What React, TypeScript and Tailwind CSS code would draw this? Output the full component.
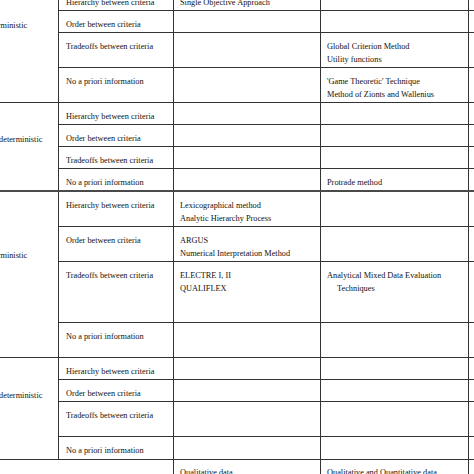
import React from 'react';

type Row = { h: string; crit: string; a?: string[]; b?: string[]; bIndent?: boolean };
type Section = { label: string; labelPad: string; rows: Row[]; thick?: boolean };

const sections: Section[] = [
  {
    label: 'Deterministic',
    labelPad: 'pt-[30px]',
    rows: [
      { h: 'h-[22px]', crit: 'Hierarchy between criteria', a: ['Single Objective Approach'] },
      { h: 'h-[22px]', crit: 'Order between criteria' },
      { h: 'h-[35px]', crit: 'Tradeoffs between criteria', b: ['Global Criterion Method', 'Utility functions'] },
      { h: 'h-[34px]', crit: 'No a priori information', b: ["'Game Theoretic' Technique", 'Method of Zionts and Wallenius'] },
    ],
  },
  {
    label: 'Non-deterministic',
    labelPad: 'pt-[30px]',
    thick: true,
    rows: [
      { h: 'h-[22px]', crit: 'Hierarchy between criteria' },
      { h: 'h-[22px]', crit: 'Order between criteria' },
      { h: 'h-[22px]', crit: 'Tradeoffs between criteria' },
      { h: 'h-[21px]', crit: 'No a priori information', b: ['Protrade method'] },
    ],
  },
  {
    label: 'Deterministic',
    labelPad: 'pt-[57px]',
    rows: [
      { h: 'h-[35px]', crit: 'Hierarchy between criteria', a: ['Lexicographical method', 'Analytic Hierarchy Process'] },
      { h: 'h-[35px]', crit: 'Order between criteria', a: ['ARGUS', 'Numerical Interpretation Method'] },
      { h: 'h-[61px]', crit: 'Tradeoffs between criteria', a: ['ELECTRE I, II', 'QUALIFLEX'], b: ['Analytical Mixed Data Evaluation', 'Techniques'], bIndent: true },
      { h: 'h-[34px]', crit: 'No a priori information' },
    ],
  },
  {
    label: 'Non-deterministic',
    labelPad: 'pt-[31px]',
    rows: [
      { h: 'h-[22px]', crit: 'Hierarchy between criteria' },
      { h: 'h-[22px]', crit: 'Order between criteria' },
      { h: 'h-[35px]', crit: 'Tradeoffs between criteria' },
      { h: 'h-[22px]', crit: 'No a priori information' },
    ],
  },
];

function Lines({ items, indent }: { items?: string[]; indent?: boolean }) {
  if (!items) return null;
  return (
    <>
      {items.map((t, i) => (
        <div key={i} className={'whitespace-nowrap ' + (indent && i > 0 ? 'pl-[10px]' : '')}>
          {t}
        </div>
      ))}
    </>
  );
}

export default function App() {
  return (
    <div
      className="w-[474px] h-[474px] overflow-hidden bg-white text-[#111] text-[8.3px] leading-[13px]"
      style={{ fontFamily: '"Liberation Serif", "Times New Roman", serif' }}
    >
      <div className="-mt-[11px]">
        {sections.map((s, si) => (
          <div
            key={si}
            className={'flex ' + (s.thick ? 'border-b-2 border-[#4a4a4a]' : 'border-b border-[#333]')}
          >
            <div className={'w-[58px] shrink-0 ' + s.labelPad}>
              <div className="-ml-[18px] whitespace-nowrap">{s.label}</div>
            </div>
            <div className="flex-1 border-l border-[#333]">
              {s.rows.map((r, ri) => (
                <div
                  key={ri}
                  className={
                    'flex ' + r.h + (ri < s.rows.length - 1 ? ' border-b border-[#333]' : '')
                  }
                >
                  <div className="w-[115px] shrink-0 border-r border-[#333] pl-[7px] pt-[7px] whitespace-nowrap">
                    {r.crit}
                  </div>
                  <div className="w-[147px] shrink-0 border-r border-[#333] pl-[6px] pt-[7px]">
                    <Lines items={r.a} />
                  </div>
                  <div className="w-[148px] shrink-0 border-r border-[#333] pl-[6px] pt-[7px]">
                    <Lines items={r.b} indent={r.bIndent} />
                  </div>
                  <div className="flex-1" />
                </div>
              ))}
            </div>
          </div>
        ))}
        <div className="flex h-[40px]">
          <div className="w-[174px] shrink-0 border-r border-[#333]" />
          <div className="w-[147px] shrink-0 border-r border-[#333] pl-[6px] pt-[6px] whitespace-nowrap">
            Qualitative data
          </div>
          <div className="w-[148px] shrink-0 border-r border-[#333] pl-[6px] pt-[6px] whitespace-nowrap">
            Qualitative and Quantitative data
          </div>
          <div className="flex-1" />
        </div>
      </div>
    </div>
  );
}
